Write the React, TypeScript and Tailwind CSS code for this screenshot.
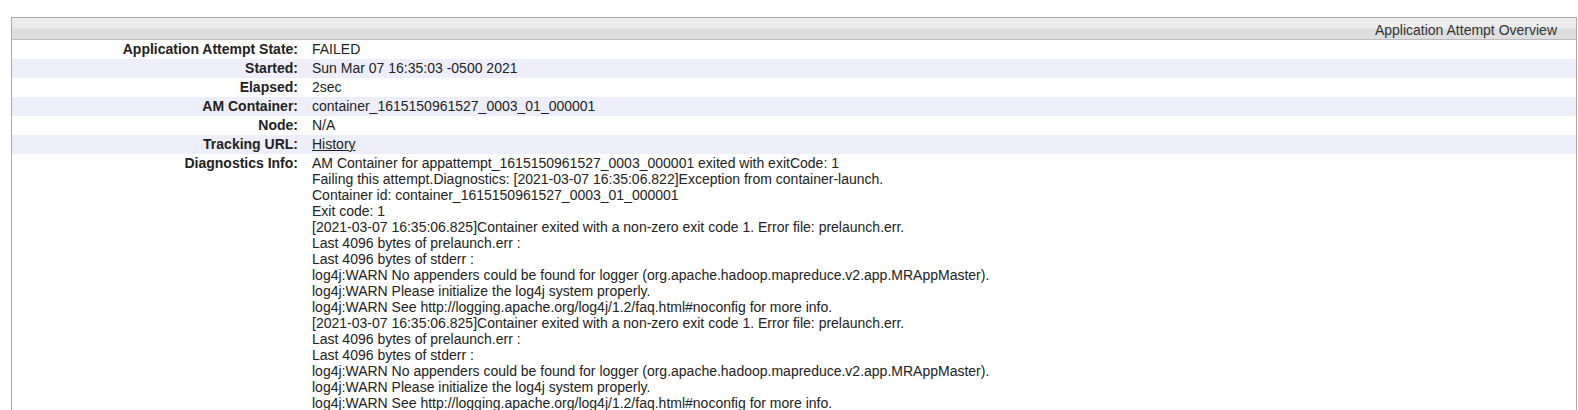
export default function App() {
  const diag = [
    "AM Container for appattempt_1615150961527_0003_000001 exited with exitCode: 1",
    "Failing this attempt.Diagnostics: [2021-03-07 16:35:06.822]Exception from container-launch.",
    "Container id: container_1615150961527_0003_01_000001",
    "Exit code: 1",
    "[2021-03-07 16:35:06.825]Container exited with a non-zero exit code 1. Error file: prelaunch.err.",
    "Last 4096 bytes of prelaunch.err :",
    "Last 4096 bytes of stderr :",
    "log4j:WARN No appenders could be found for logger (org.apache.hadoop.mapreduce.v2.app.MRAppMaster).",
    "log4j:WARN Please initialize the log4j system properly.",
    "log4j:WARN See http://logging.apache.org/log4j/1.2/faq.html#noconfig for more info.",
    "[2021-03-07 16:35:06.825]Container exited with a non-zero exit code 1. Error file: prelaunch.err.",
    "Last 4096 bytes of prelaunch.err :",
    "Last 4096 bytes of stderr :",
    "log4j:WARN No appenders could be found for logger (org.apache.hadoop.mapreduce.v2.app.MRAppMaster).",
    "log4j:WARN Please initialize the log4j system properly.",
    "log4j:WARN See http://logging.apache.org/log4j/1.2/faq.html#noconfig for more info.",
  ];
  const rows: [string, React.ReactNode][] = [
    ["Application Attempt State:", "FAILED"],
    ["Started:", "Sun Mar 07 16:35:03 -0500 2021"],
    ["Elapsed:", "2sec"],
    ["AM Container:", "container_1615150961527_0003_01_000001"],
    ["Node:", "N/A"],
    ["Tracking URL:", <span className="underline">History</span>],
  ];
  return (
    <div className="bg-white h-[410px] overflow-hidden pt-[17px] pl-[11px] pr-[1px] text-[14px] text-[#222]" style={{ fontFamily: '"Liberation Sans", Arial, sans-serif' }}>
      <div className="border border-[#aaa] border-b-0">
        <div className="h-[22px] border-b border-[#bbb] bg-[linear-gradient(#ececec_0%,#ececec_45%,#dedede_55%,#dedede_100%)] text-right pr-[19px] leading-[24px] text-[#333]">
          Application Attempt Overview
        </div>
        {rows.map(([k, v], i) => (
          <div key={i} className={`flex h-[19px] items-center ${i % 2 === 1 ? "bg-[#eeeefb]" : ""}`}>
            <div className="w-[300px] text-right font-bold pr-[14px]">{k}</div>
            <div>{v}</div>
          </div>
        ))}
        <div className="flex pt-[1px]">
          <div className="w-[300px] text-right font-bold pr-[14px] leading-[16px]">Diagnostics Info:</div>
          <div className="leading-[16px]">
            {diag.map((d, i) => (
              <div key={i}>{d}</div>
            ))}
          </div>
        </div>
      </div>
    </div>
  );
}
